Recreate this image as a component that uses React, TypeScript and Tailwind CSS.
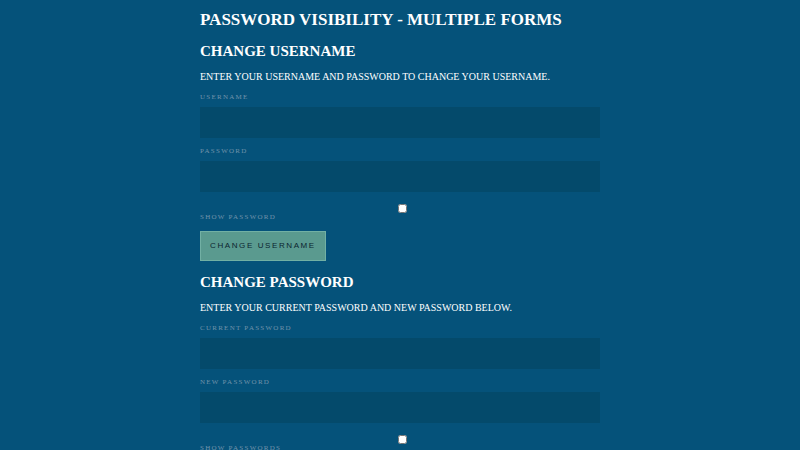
import React from "react"

function Field({ label }: { label: string }) {
  return (
    <div className="flex flex-col">
      <label className="text-[7px] leading-[10px] tracking-[0.18em] text-[#7193aa] uppercase mb-[5px]">{label}</label>
      <input type="password" className="h-[31px] w-full bg-[#044a6b] outline-none border-0 mb-[8px]" />
    </div>
  )
}

function Toggle({ label }: { label: string }) {
  return (
    <div className="flex flex-col">
      <div className="flex justify-center pl-[4px] mt-[4px]">
        <input type="checkbox" className="w-[9px] h-[9px] m-0" />
      </div>
      <label className="text-[7px] leading-[8px] tracking-[0.18em] text-[#7193aa] uppercase">{label}</label>
    </div>
  )
}

export default function App() {
  return (
    <div className="w-full min-h-[450px] bg-[#05527a] text-white font-['Liberation_Serif',serif]">
      <div className="w-[400px] mx-auto pt-[8px]">
        <h1 className="text-[17px] leading-[24px] font-bold whitespace-nowrap">PASSWORD VISIBILITY - MULTIPLE FORMS</h1>

        {/* Change username */}
        <h2 className="text-[15px] leading-[20px] font-bold mt-[9px]">CHANGE USERNAME</h2>
        <p className="text-[10px] leading-[14px] mt-[9px] mb-[8px] whitespace-nowrap">ENTER YOUR USERNAME AND PASSWORD TO CHANGE YOUR USERNAME.</p>
        <Field label="Username" />
        <Field label="Password" />
        <Toggle label="Show password" />
        <button className="mt-[10px] h-[30px] px-[9px] bg-[#5a9a8f] border border-[#72b0a4] text-[#0b2530] text-[8px] font-medium tracking-[0.2em] font-['Liberation_Sans',sans-serif]">
          CHANGE USERNAME
        </button>

        {/* Change password */}
        <h2 className="text-[15px] leading-[20px] font-bold mt-[11px]">CHANGE PASSWORD</h2>
        <p className="text-[10px] leading-[14px] mt-[9px] mb-[8px] whitespace-nowrap">ENTER YOUR CURRENT PASSWORD AND NEW PASSWORD BELOW.</p>
        <Field label="Current password" />
        <Field label="New password" />
        <Toggle label="Show passwords" />
      </div>
    </div>
  )
}
